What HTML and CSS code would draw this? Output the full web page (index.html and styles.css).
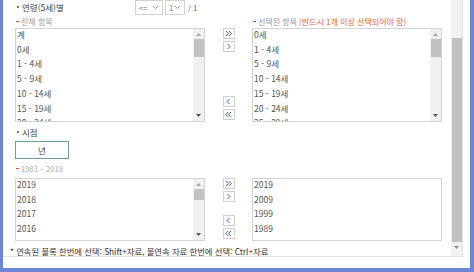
FILE: index.html
```html
<!DOCTYPE html>
<html lang="ko">
<head>
<meta charset="utf-8">
<title>연령(5세)별</title>
<link rel="stylesheet" href="styles.css">
</head>
<body>
<div class="frame">
  <div class="viewport">
    <div class="content">
      <div class="form">
        <div class="head">
          <span class="title">연령(5세)별</span>
          <div class="sel sel-op"><span>&lt;=</span><svg width="7" height="5" viewBox="0 0 7 5"><path d="M1 1l2.5 2.5L6 1" fill="none" stroke="#9a9a9a" stroke-width="1"/></svg></div>
          <div class="sel sel-num"><span>1</span><svg width="7" height="5" viewBox="0 0 7 5"><path d="M1 1l2.5 2.5L6 1" fill="none" stroke="#9a9a9a" stroke-width="1"/></svg></div>
          <span class="slash">/ 1</span>
        </div>

        <div class="transfer t1">
          <div class="cap">전체 항목</div>
          <div></div>
          <div class="cap">선택된 항목 <em class="warn">(반드시 1개 이상 선택되어야 함)</em></div>

          <div class="listbox">
            <ul class="items">
              <li>계</li><li>0세</li><li>1 - 4세</li><li>5 - 9세</li><li>10 - 14세</li><li>15 - 19세</li><li>20 - 24세</li>
            </ul>
            <div class="vscroll">
              <svg class="arr" width="5" height="3" viewBox="0 0 5 3"><path d="M0 3L2.5 0L5 3z" fill="#a5a5a5"/></svg>
              <div class="thumb thumb-a"></div>
              <div class="fill"></div>
              <svg class="arr" width="5" height="3" viewBox="0 0 5 3"><path d="M0 0L2.5 3L5 0z" fill="#555"/></svg>
            </div>
          </div>
          <div class="btns">
            <div class="grp">
              <div class="btn"><svg width="7" height="7" viewBox="0 0 7 7"><path d="M1 1l2.5 2.5L1 6M3.8 1l2.5 2.5L3.8 6" fill="none" stroke="#4066c8" stroke-width="1"/></svg></div>
              <div class="btn"><svg width="7" height="7" viewBox="0 0 7 7"><path d="M2.5 1L5 3.5L2.5 6" fill="none" stroke="#4066c8" stroke-width="1"/></svg></div>
            </div>
            <div class="grp">
              <div class="btn"><svg width="7" height="7" viewBox="0 0 7 7"><path d="M4.5 1L2 3.5L4.5 6" fill="none" stroke="#4066c8" stroke-width="1"/></svg></div>
              <div class="btn"><svg width="7" height="7" viewBox="0 0 7 7"><path d="M6 1L3.5 3.5L6 6M3.2 1L0.7 3.5L3.2 6" fill="none" stroke="#4066c8" stroke-width="1"/></svg></div>
            </div>
          </div>
          <div class="listbox">
            <ul class="items">
              <li>0세</li><li>1 - 4세</li><li>5 - 9세</li><li>10 - 14세</li><li>15 - 19세</li><li>20 - 24세</li><li>25 - 29세</li>
            </ul>
            <div class="vscroll">
              <svg class="arr" width="5" height="3" viewBox="0 0 5 3"><path d="M0 3L2.5 0L5 3z" fill="#a5a5a5"/></svg>
              <div class="thumb thumb-a"></div>
              <div class="fill"></div>
              <svg class="arr" width="5" height="3" viewBox="0 0 5 3"><path d="M0 0L2.5 3L5 0z" fill="#555"/></svg>
            </div>
          </div>
        </div>

        <div class="sec">시점</div>
        <div class="tab">년</div>

        <div class="transfer t2">
          <div class="cap">1983 ~ 2019</div>
          <div></div>
          <div></div>

          <div class="listbox">
            <ul class="items">
              <li>2019</li><li>2018</li><li>2017</li><li>2016</li><li>2015</li>
            </ul>
            <div class="vscroll">
              <svg class="arr" width="5" height="3" viewBox="0 0 5 3"><path d="M0 3L2.5 0L5 3z" fill="#a5a5a5"/></svg>
              <div class="thumb thumb-b"></div>
              <div class="fill"></div>
              <svg class="arr" width="5" height="3" viewBox="0 0 5 3"><path d="M0 0L2.5 3L5 0z" fill="#555"/></svg>
            </div>
          </div>
          <div class="btns">
            <div class="grp">
              <div class="btn"><svg width="7" height="7" viewBox="0 0 7 7"><path d="M1 1l2.5 2.5L1 6M3.8 1l2.5 2.5L3.8 6" fill="none" stroke="#4066c8" stroke-width="1"/></svg></div>
              <div class="btn"><svg width="7" height="7" viewBox="0 0 7 7"><path d="M2.5 1L5 3.5L2.5 6" fill="none" stroke="#4066c8" stroke-width="1"/></svg></div>
            </div>
            <div class="grp">
              <div class="btn"><svg width="7" height="7" viewBox="0 0 7 7"><path d="M4.5 1L2 3.5L4.5 6" fill="none" stroke="#4066c8" stroke-width="1"/></svg></div>
              <div class="btn"><svg width="7" height="7" viewBox="0 0 7 7"><path d="M6 1L3.5 3.5L6 6M3.2 1L0.7 3.5L3.2 6" fill="none" stroke="#4066c8" stroke-width="1"/></svg></div>
            </div>
          </div>
          <div class="listbox">
            <ul class="items">
              <li>2019</li><li>2009</li><li>1999</li><li>1989</li>
            </ul>
          </div>
        </div>
      </div>
      <p class="note">* 연속된 블록 한번에 선택: Shift+자료, 불연속 자료 한번에 선택: Ctrl+자료</p>
    </div>
    <div class="pagescroll">
      <div class="pthumb"></div>
      <svg class="parr" width="5" height="3" viewBox="0 0 5 3"><path d="M0 0L2.5 3L5 0z" fill="#8a8a8a"/></svg>
    </div>
  </div>
</div>
</body>
</html>
```

FILE: styles.css
```css
* { box-sizing: border-box; }
html, body { margin: 0; padding: 0; background: #fff; }
body {
  font-family: "Noto Sans CJK KR", "Noto Sans", sans-serif;
  color: #555;
}

.frame {
  width: 474px;
  height: 272px;
  border-left: 3px solid #6e84d7;
  border-right: 4px solid #6e84d7;
  border-bottom: 4px solid #6e84d7;
  background: #fff;
  overflow: hidden;
}

.viewport {
  display: flex;
  width: 460px;
  height: 257px;
  border-right: 1px solid #e4e4e4;
  border-bottom: 1px solid #e4e4e4;
}

.content {
  flex: 1;
  min-width: 0;
  padding-left: 7px;
  overflow: hidden;
}

.form { padding-left: 5px; }

/* header row */
.head {
  display: flex;
  align-items: center;
  height: 16px;
  margin-top: -1px;
  font-size: 8.5px;
}
.title, .sec {
  display: flex;
  align-items: center;
  color: #444;
}
.title { width: 120px; }
.title::before, .sec::before {
  content: "";
  width: 2px;
  height: 2px;
  margin: 0 3px 0 2px;
  background: #777;
}
.sel {
  display: flex;
  align-items: center;
  justify-content: space-between;
  height: 15px;
  padding: 0 3px;
  border: 1px solid #d2d2d2;
  font-size: 7.5px;
  color: #777;
}
.sel-op { width: 28px; }
.sel-num { width: 20px; margin-left: 2px; }
.slash { margin-left: 3px; font-size: 7.5px; color: #666; }

/* captions */
.cap {
  display: flex;
  align-items: center;
  height: 13px;
  font-size: 8px;
  color: #9a9a9a;
  white-space: nowrap;
}
.cap::before {
  content: "";
  width: 3px;
  height: 1px;
  margin: 0 2px 0 1px;
  background: #e2452c;
}
.warn { font-style: normal; color: #e8633f; margin-left: 2px; }

/* transfer */
.transfer {
  display: grid;
  grid-template-columns: 190px 47px 190px;
}
.t1 .listbox { height: 94px; }
.t2 .cap { height: 19px; color: #aaa; font-size: 7.5px; }
.t2 .listbox { height: 63px; }

.listbox {
  display: flex;
  border: 1px solid #d4d4d4;
  overflow: hidden;
}
.items {
  flex: 1;
  margin: -2px 0 0;
  padding: 0 0 0 1px;
  list-style: none;
  font-size: 8.5px;
  line-height: 14.7px;
  color: #555;
  white-space: nowrap;
}
.vscroll {
  width: 11px;
  display: flex;
  flex-direction: column;
  align-items: center;
  background: #f0f0f0;
}
.arr { display: block; flex: none; margin: 4px 0 3px; }
.vscroll .arr:last-child { margin: 3px 0 4px; }
.thumb { width: 10px; background: #c2c2c2; flex: none; }
.thumb-a { height: 18px; }
.thumb-b { height: 11px; }
.fill { flex: 1; }

.btns {
  display: flex;
  flex-direction: column;
  justify-content: space-between;
  align-items: center;
  padding: 0 0 2px 0;
}
.grp { display: flex; flex-direction: column; gap: 2px; }
.btn {
  display: flex;
  align-items: center;
  justify-content: center;
  width: 12px;
  height: 11px;
  border: 1px solid #d0d0d0;
  background: #fbfbfb;
}
.btn svg { display: block; }

/* time section */
.sec { height: 19px; font-size: 8.5px; }
.tab {
  display: flex;
  align-items: center;
  justify-content: center;
  width: 54px;
  height: 18px;
  border: 1px solid #709c9c;
  font-size: 8.5px;
  color: #444;
}

/* note */
.note {
  margin: 4px 0 0;
  height: 12px;
  line-height: 12px;
  font-size: 8.3px;
  color: #333;
  white-space: nowrap;
}

/* page scrollbar */
.pagescroll {
  width: 11px;
  display: flex;
  flex-direction: column;
  align-items: center;
  background: #f0f0f0;
}
.pthumb { width: 10px; height: 204px; margin-top: 38px; background: #c1c1c1; }
.parr { display: block; margin-top: 4px; }
```
